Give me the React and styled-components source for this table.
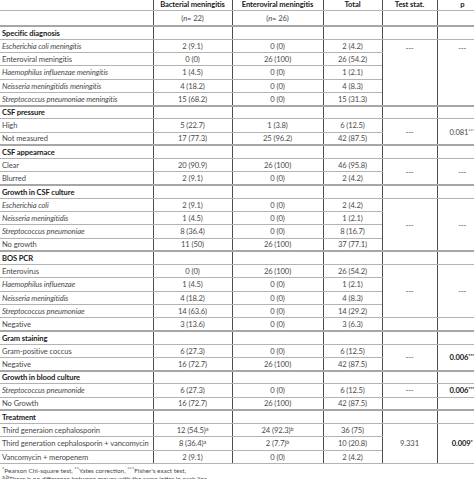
import React from 'react';
import styled, {createGlobalStyle} from 'styled-components';

const GlobalStyle = createGlobalStyle`
    html, body {
        margin: 0;
        padding: 0;
        background: #fff;
        overflow: hidden;
    }
    body {
        width: 474px;
        height: 479px;
        font-family: Lato, "Liberation Sans", sans-serif;
    }
`;

const Page = styled.div`
    width: 474px;
    height: 479px;
    overflow: hidden;
`;

const Table = styled.table`
    width: 487px;
    margin-top: -2px;
    border-collapse: collapse;
    table-layout: fixed;
    font-size: 7.6px;
    letter-spacing: -0.1px;
    color: #4a4a4a;
`;

const HeadRow = styled.tr`
    height: 12px;
`;

const SubRow = styled.tr`
    height: 16px;
`;

const Row = styled.tr`
    height: 13.25px;
`;

const HeadCell = styled.th`
    padding: 0;
    font-weight: 700;
    color: #1a1a1a;
    text-align: center;
    vertical-align: middle;
    border-bottom: 1px solid #b3b3b3;
    border-left: ${p => p.$first ? 'none' : '1px solid #4d4d4d'};
`;

const Cell = styled.td`
    padding: 0;
    text-align: center;
    vertical-align: ${p => p.$top ? 'top' : 'middle'};
    padding-top: ${p => p.$top ? '3px' : '0'};
    border-bottom: 1px solid #b3b3b3;
    border-top: ${p => p.$section ? '2px solid #a6a6a6' : '1px solid #b3b3b3'};
    border-left: 1px solid #4d4d4d;
    font-weight: ${p => p.$bold ? 700 : 400};
    color: ${p => p.$bold ? '#1a1a1a' : '#4a4a4a'};
    white-space: nowrap;
`;

const LabelCell = styled.td`
    padding: 0 0 0 2px;
    text-align: left;
    vertical-align: middle;
    white-space: nowrap;
    border-bottom: 1px solid #b3b3b3;
    border-top: ${p => p.$section ? '2px solid #a6a6a6' : '1px solid #b3b3b3'};
    font-style: ${p => p.$italic ? 'italic' : 'normal'};
    font-weight: ${p => p.$section ? 700 : 400};
    color: ${p => p.$section ? '#1a1a1a' : '#4a4a4a'};
`;

const Sup = styled.sup`
    font-size: 5.5px;
    line-height: 0;
    vertical-align: 2px;
`;

const Note = styled.div`
    padding: 3px 0 0 2px;
    font-size: 6.4px;
    line-height: 8px;
    color: #4a4a4a;
    white-space: nowrap;
`;

const sections = [
    {
        title: 'Specific diagnosis',
        rows: [
            {label: 'Escherichia coli meningitis', italic: true, b: '2 (9.1)', e: '0 (0)', t: '2 (4.2)', stat: {span: 5, top: true, test: '---', p: '---'}},
            {label: 'Enteroviral meningitis', b: '0 (0)', e: '26 (100)', t: '26 (54.2)'},
            {label: 'Haemophilus influenzae meningitis', italic: true, b: '1 (4.5)', e: '0 (0)', t: '1 (2.1)'},
            {label: 'Neisseria meningitidis meningitis', italic: true, b: '4 (18.2)', e: '0 (0)', t: '4 (8.3)'},
            {label: 'Streptococcus pneumoniae  meningitis', italic: true, b: '15 (68.2)', e: '0 (0)', t: '15 (31.3)'},
        ]
    },
    {
        title: 'CSF pressure',
        rows: [
            {label: 'High', b: '5 (22.7)', e: '1 (3.8)', t: '6 (12.5)', stat: {span: 2, test: '---', p: '0.081', mark: '***'}},
            {label: 'Not measured', b: '17 (77.3)', e: '25 (96.2)', t: '42 (87.5)'},
        ]
    },
    {
        title: 'CSF appearnace',
        rows: [
            {label: 'Clear', b: '20 (90.9)', e: '26 (100)', t: '46 (95.8)', stat: {span: 2, test: '---', p: '---'}},
            {label: 'Blurred', b: '2 (9.1)', e: '0 (0)', t: '2 (4.2)'},
        ]
    },
    {
        title: 'Growth in CSF culture',
        rows: [
            {label: 'Escherichia coli', italic: true, b: '2 (9.1)', e: '0 (0)', t: '2 (4.2)', stat: {span: 4, test: '---', p: '---'}},
            {label: 'Neisseria meningitidis', italic: true, b: '1 (4.5)', e: '0 (0)', t: '1 (2.1)'},
            {label: 'Streptococcus pneumoniae', italic: true, b: '8 (36.4)', e: '0 (0)', t: '8 (16.7)'},
            {label: 'No growth', b: '11 (50)', e: '26 (100)', t: '37 (77.1)'},
        ]
    },
    {
        title: 'BOS PCR',
        rows: [
            {label: 'Enterovirus', b: '0 (0)', e: '26 (100)', t: '26 (54.2)', stat: {span: 4, test: '---', p: '---'}},
            {label: 'Haemophilus influenzae', italic: true, b: '1 (4.5)', e: '0 (0)', t: '1 (2.1)'},
            {label: 'Neisseria meningitidis', italic: true, b: '4 (18.2)', e: '0 (0)', t: '4 (8.3)'},
            {label: 'Streptococcus pneumoniae', italic: true, b: '14 (63.6)', e: '0 (0)', t: '14 (29.2)'},
            {label: 'Negative', b: '3 (13.6)', e: '0 (0)', t: '3 (6.3)', stat: {span: 1, test: '', p: ''}},
        ]
    },
    {
        title: 'Gram staining',
        rows: [
            {label: 'Gram-positive coccus', b: '6 (27.3)', e: '0 (0)', t: '6 (12.5)', stat: {span: 2, test: '---', p: '0.006', mark: '***', bold: true}},
            {label: 'Negative', b: '16 (72.7)', e: '26 (100)', t: '42 (87.5)'},
        ]
    },
    {
        title: 'Growth in blood culture',
        rows: [
            {label: 'Streptococcus pneumonide', italic: true, b: '6 (27.3)', e: '0 (0)', t: '6 (12.5)', stat: {span: 1, test: '---', p: '0.006', mark: '***', bold: true}},
            {label: 'No Growth', b: '16 (72.7)', e: '26 (100)', t: '42 (87.5)', stat: {span: 1, test: '', p: ''}},
        ]
    },
    {
        title: 'Treatment',
        rows: [
            {label: 'Third generaion cephalosporin', b: '12 (54.5)', bs: 'a', e: '24 (92.3)', es: 'b', t: '36 (75)', stat: {span: 3, test: '9.331', p: '0.009', mark: '*', bold: true}},
            {label: 'Third generation cephalosporin + vancomycin', b: '8 (36.4)', bs: 'a', e: '2 (7.7)', es: 'b', t: '10 (20.8)'},
            {label: 'Vancomycin + meropenem', b: '2 (9.1)', e: '0 (0)', t: '2 (4.2)'},
        ]
    },
];

const StatCells = ({stat}) => {
    if (!stat) {
        return null;
    }
    return (
        <>
            <Cell rowSpan={stat.span} $top={stat.top}>{stat.test}</Cell>
            <Cell rowSpan={stat.span} $top={stat.top} $bold={stat.bold}>
                {stat.p}{stat.mark ? <Sup>{stat.mark}</Sup> : null}
            </Cell>
        </>
    );
};

const Section = ({section}) => {
    return (
        <>
            <Row>
                <LabelCell $section>{section.title}</LabelCell>
                <Cell $section></Cell>
                <Cell $section></Cell>
                <Cell $section></Cell>
                <Cell $section></Cell>
                <Cell $section></Cell>
            </Row>
            {section.rows.map((row, i) => (
                <Row key={i}>
                    <LabelCell $italic={row.italic}>{row.label}</LabelCell>
                    <Cell>{row.b}{row.bs ? <Sup>{row.bs}</Sup> : null}</Cell>
                    <Cell>{row.e}{row.es ? <Sup>{row.es}</Sup> : null}</Cell>
                    <Cell>{row.t}</Cell>
                    <StatCells stat={row.stat}/>
                </Row>
            ))}
        </>
    );
};

export default function App() {
    return (
        <Page>
            <GlobalStyle/>
            <Table>
                <colgroup>
                    <col style={{width: 153}}/>
                    <col style={{width: 79}}/>
                    <col style={{width: 91}}/>
                    <col style={{width: 59}}/>
                    <col style={{width: 55}}/>
                    <col style={{width: 50}}/>
                </colgroup>
                <thead>
                    <HeadRow>
                        <HeadCell $first></HeadCell>
                        <HeadCell>Bacterial meningitis</HeadCell>
                        <HeadCell>Enteroviral meningitis</HeadCell>
                        <HeadCell>Total</HeadCell>
                        <HeadCell>Test stat.</HeadCell>
                        <HeadCell>p</HeadCell>
                    </HeadRow>
                </thead>
                <tbody>
                    <SubRow>
                        <LabelCell></LabelCell>
                        <Cell>(<i>n</i>= 22)</Cell>
                        <Cell>(<i>n</i>= 26)</Cell>
                        <Cell></Cell>
                        <Cell></Cell>
                        <Cell></Cell>
                    </SubRow>
                    {sections.map((s, i) => <Section key={i} section={s}/>)}
                </tbody>
            </Table>
            <Note>
                <Sup>*</Sup>Pearson Chi-square test, <Sup>**</Sup>Yates correction, <Sup>***</Sup>Fisher's exact test,
                <br/>
                <Sup>a,b</Sup>There is no difference between groups with the same letter in each line
            </Note>
        </Page>
    );
}
